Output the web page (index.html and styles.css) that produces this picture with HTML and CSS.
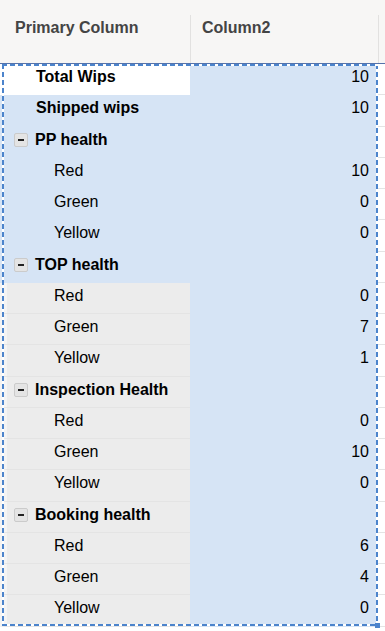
FILE: index.html
```html
<!DOCTYPE html>
<html>
<head>
<meta charset="utf-8">
<link rel="stylesheet" href="styles.css">
</head>
<body>
<div class="sheet">
  <div class="head">
    <div class="hc hc1"><span>Primary Column</span></div>
    <div class="hc hc2"><span>Column2</span></div>
    <div class="hc hc3"></div>
  </div>
  <div class="body">
    <div class="row"><div class="c1 active"><span class="lbl top">Total Wips</span></div><div class="c2">10</div><div class="c3"></div></div>
    <div class="row"><div class="c1 sel"><span class="lbl top">Shipped wips</span></div><div class="c2">10</div><div class="c3"></div></div>
    <div class="row"><div class="c1 sel"><span class="tog"></span><span class="lbl grp">PP health</span></div><div class="c2"></div><div class="c3"></div></div>
    <div class="row"><div class="c1 sel"><span class="lbl child">Red</span></div><div class="c2">10</div><div class="c3"></div></div>
    <div class="row"><div class="c1 sel"><span class="lbl child">Green</span></div><div class="c2">0</div><div class="c3"></div></div>
    <div class="row"><div class="c1 sel"><span class="lbl child">Yellow</span></div><div class="c2">0</div><div class="c3"></div></div>
    <div class="row"><div class="c1 sel"><span class="tog"></span><span class="lbl grp">TOP health</span></div><div class="c2"></div><div class="c3"></div></div>
    <div class="row"><div class="c1 gray"><span class="lbl child">Red</span></div><div class="c2">0</div><div class="c3"></div></div>
    <div class="row"><div class="c1 gray"><span class="lbl child">Green</span></div><div class="c2">7</div><div class="c3"></div></div>
    <div class="row"><div class="c1 gray"><span class="lbl child">Yellow</span></div><div class="c2">1</div><div class="c3"></div></div>
    <div class="row"><div class="c1 gray"><span class="tog"></span><span class="lbl grp">Inspection Health</span></div><div class="c2"></div><div class="c3"></div></div>
    <div class="row"><div class="c1 gray"><span class="lbl child">Red</span></div><div class="c2">0</div><div class="c3"></div></div>
    <div class="row"><div class="c1 gray"><span class="lbl child">Green</span></div><div class="c2">10</div><div class="c3"></div></div>
    <div class="row"><div class="c1 gray"><span class="lbl child">Yellow</span></div><div class="c2">0</div><div class="c3"></div></div>
    <div class="row"><div class="c1 gray"><span class="tog"></span><span class="lbl grp">Booking health</span></div><div class="c2"></div><div class="c3"></div></div>
    <div class="row"><div class="c1 gray"><span class="lbl child">Red</span></div><div class="c2">6</div><div class="c3"></div></div>
    <div class="row"><div class="c1 gray"><span class="lbl child">Green</span></div><div class="c2">4</div><div class="c3"></div></div>
    <div class="row"><div class="c1 gray"><span class="lbl child">Yellow</span></div><div class="c2">0</div><div class="c3"></div></div>
    <div class="selection"><div class="handle"></div></div>
  </div>
</div>
</body>
</html>
```

FILE: styles.css
```css
html, body {
  margin: 0;
  padding: 0;
  background: #ffffff;
}
.sheet {
  width: 385px;
  height: 631px;
  overflow: hidden;
  font-family: "Liberation Sans", Arial, sans-serif;
  font-size: 16px;
  color: #000;
}
.head {
  display: flex;
  height: 63px;
  background: #f7f6f5;
  border-bottom: 1px solid #5573ab;
}
.hc {
  box-sizing: border-box;
  height: 63px;
  padding-top: 15px;
}
.hc span {
  display: block;
  height: 48px;
  line-height: 26px;
  font-weight: bold;
  color: #444;
  padding-left: 15px;
}
.hc1 { width: 190px; }
.hc2 { width: 188px; }
.hc3 { width: 7px; }
.hc2 span, .hc3 {
  border-left: 1px solid #e2e1e0;
}
.hc2 span { padding-left: 11px; }
.hc3 { margin-top: 15px; padding-top: 0; height: 48px; }
.body {
  position: relative;
}
.row {
  display: flex;
  height: 31.25px;
}
.c1, .c2, .c3 {
  box-sizing: border-box;
  height: 31.25px;
  line-height: 24px;
  padding-top: 1px;
}
.c1 {
  width: 190px;
  display: flex;
  align-items: flex-start;
}
.c1.active { background: #ffffff; }
.c1.sel { background: #d6e4f5; }
.c1.gray {
  background: #ececec;
  border-left: 7px solid #f4f4f4;
  border-bottom: 1px solid #e4e4e4;
}
.c2 {
  width: 188px;
  background: #d6e4f5;
  text-align: right;
  padding-right: 9px;
}
.c3 {
  width: 7px;
  background: #fff;
  border-bottom: 1px solid #e4e4e4;
}
.lbl.top { font-weight: bold; padding-left: 36px; }
.lbl.grp { font-weight: bold; padding-left: 7px; }
.lbl.child { padding-left: 54px; }
.gray .lbl.child { padding-left: 47px; }
.tog {
  box-sizing: border-box;
  width: 14px;
  height: 14px;
  margin: 5px 0 0 14px;
  background: #e4e4e4;
  border: 1px solid #cbcbcb;
  border-radius: 2px;
  position: relative;
  flex: none;
}
.gray .tog { margin-left: 7px; }
.tog::after {
  content: "";
  position: absolute;
  left: 3px;
  top: 5px;
  width: 6px;
  height: 2px;
  background: #222;
}
.selection {
  position: absolute;
  left: 2px;
  top: 0;
  width: 376px;
  height: 562px;
  box-sizing: border-box;
  pointer-events: none;
  background:
    repeating-linear-gradient(90deg, #4c84cc 0 5px, #ffffff 5px 8px) top left / 100% 2px no-repeat,
    repeating-linear-gradient(90deg, #4c84cc 0 5px, #ffffff 5px 8px) bottom left / 100% 2px no-repeat,
    repeating-linear-gradient(180deg, #4c84cc 0 5px, #ffffff 5px 8px) top left / 2px 100% no-repeat,
    repeating-linear-gradient(180deg, #4c84cc 0 5px, #ffffff 5px 8px) top right / 2px 100% no-repeat;
}
.handle {
  position: absolute;
  right: -2px;
  bottom: -2px;
  width: 5px;
  height: 5px;
  background: #4c84cc;
}
```
